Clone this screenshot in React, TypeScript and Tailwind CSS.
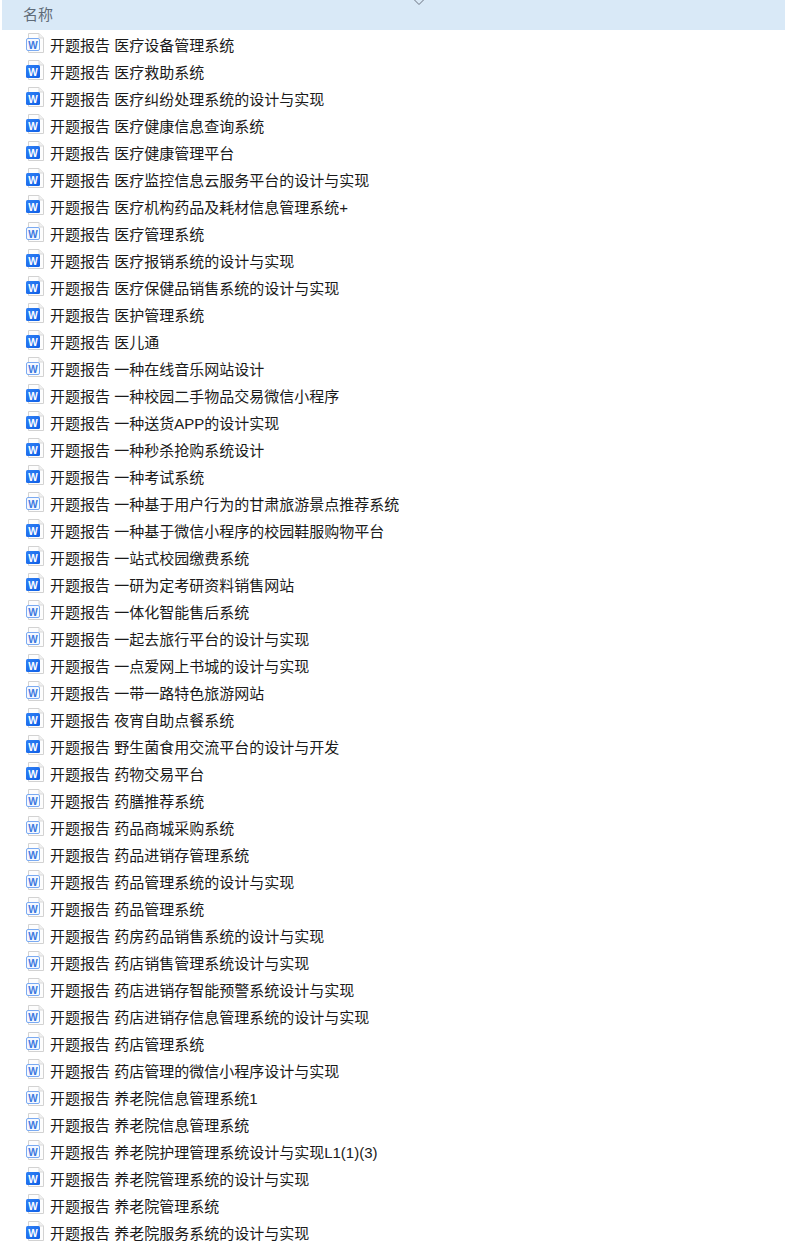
const rows: [string, boolean][] = [
  ['医疗设备管理系统', true],
  ['医疗救助系统', false],
  ['医疗纠纷处理系统的设计与实现', false],
  ['医疗健康信息查询系统', false],
  ['医疗健康管理平台', false],
  ['医疗监控信息云服务平台的设计与实现', false],
  ['医疗机构药品及耗材信息管理系统+', false],
  ['医疗管理系统', true],
  ['医疗报销系统的设计与实现', false],
  ['医疗保健品销售系统的设计与实现', false],
  ['医护管理系统', false],
  ['医儿通', false],
  ['一种在线音乐网站设计', true],
  ['一种校园二手物品交易微信小程序', false],
  ['一种送货APP的设计实现', false],
  ['一种秒杀抢购系统设计', false],
  ['一种考试系统', false],
  ['一种基于用户行为的甘肃旅游景点推荐系统', true],
  ['一种基于微信小程序的校园鞋服购物平台', false],
  ['一站式校园缴费系统', false],
  ['一研为定考研资料销售网站', false],
  ['一体化智能售后系统', true],
  ['一起去旅行平台的设计与实现', true],
  ['一点爱网上书城的设计与实现', false],
  ['一带一路特色旅游网站', true],
  ['夜宵自助点餐系统', false],
  ['野生菌食用交流平台的设计与开发', false],
  ['药物交易平台', false],
  ['药膳推荐系统', true],
  ['药品商城采购系统', true],
  ['药品进销存管理系统', true],
  ['药品管理系统的设计与实现', true],
  ['药品管理系统', true],
  ['药房药品销售系统的设计与实现', true],
  ['药店销售管理系统设计与实现', true],
  ['药店进销存智能预警系统设计与实现', true],
  ['药店进销存信息管理系统的设计与实现', true],
  ['药店管理系统', true],
  ['药店管理的微信小程序设计与实现', true],
  ['养老院信息管理系统1', true],
  ['养老院信息管理系统', true],
  ['养老院护理管理系统设计与实现L1(1)(3)', true],
  ['养老院管理系统的设计与实现', false],
  ['养老院管理系统', false],
  ['养老院服务系统的设计与实现', false],
]

function WordIcon({ light }: { light: boolean }) {
  return (
    <svg
      width="20"
      height="21"
      viewBox="0 0 20 21"
      className="mb-[2px] shrink-0"
    >
      <defs>
        <linearGradient id="badge" x1="0" y1="0" x2="1" y2="1">
          <stop offset="0" stopColor="#2f80f5" />
          <stop offset="1" stopColor="#0f5fe6" />
        </linearGradient>
      </defs>
      {/* sheet with folded corner */}
      <path d="M3.5 0.5H14L18.5 5V19.5H3.5Z" fill="#fdfdfd" stroke="#d2d2d2" />
      <path d="M14 0.5V5H18.5" fill="#f0f0f0" stroke="#dadada" />
      {light ? (
        <rect
          x="1.5"
          y="5.5"
          width="13"
          height="12"
          rx="1.5"
          fill="#f5f9ff"
          stroke="#7aaaf2"
        />
      ) : (
        <rect x="1" y="5" width="14" height="13" rx="1.5" fill="url(#badge)" />
      )}
      <text
        x="8"
        y="15.5"
        textAnchor="middle"
        fontSize="10"
        fontWeight="700"
        fontFamily="'Liberation Sans', sans-serif"
        fill={light ? '#3b78e0' : '#ffffff'}
      >
        W
      </text>
    </svg>
  )
}

export default function App() {
  return (
    <div className="w-[785px] h-[1246px] overflow-hidden bg-white font-['Liberation_Sans','Noto_Sans_CJK_SC',sans-serif] text-[15px] text-[#1a1a1a]">
      <div className="relative ml-[2px] flex h-[30px] items-center bg-[#d9e9f7] pl-[21px] text-[#5f6b78]">
        名称
        <svg
          width="10"
          height="5"
          viewBox="0 0 10 5"
          className="absolute left-[412px] top-0"
        >
          <path d="M0.5 0L5 4.5L9.5 0" fill="none" stroke="#6b7280" />
        </svg>
      </div>
      <ul className="pt-[1px]">
        {rows.map(([name, light]) => (
          <li key={name} className="flex h-[27px] items-center pl-[25px]">
            <WordIcon light={light} />
            <span className="ml-[5px] mt-[1px] whitespace-nowrap leading-[27px]">
              开题报告 {name}
            </span>
          </li>
        ))}
      </ul>
    </div>
  )
}
